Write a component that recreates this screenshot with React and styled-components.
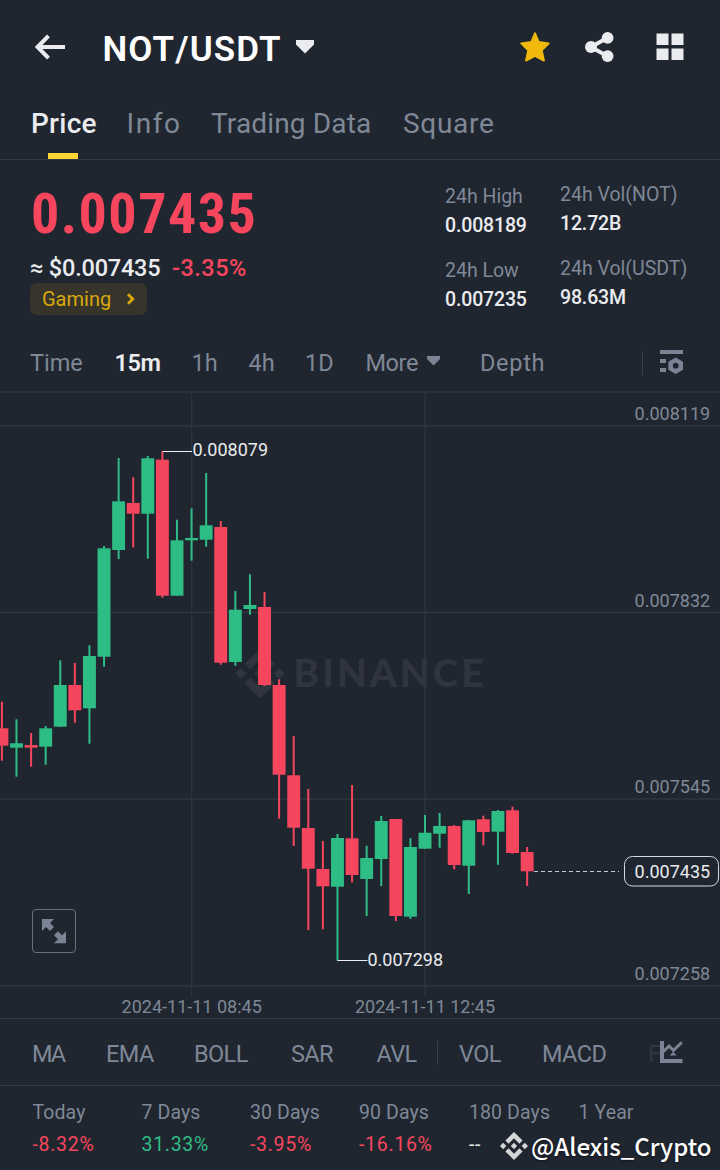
import React from "react";
import styled, { createGlobalStyle } from "styled-components";
import { SiBinance } from "react-icons/si";

const tabs = [
  { name: "Price", spacing: "0.25px" },
  { name: "Info", spacing: "1.6px" },
  { name: "Trading Data", spacing: "0.15px" },
  { name: "Square", spacing: "0.7px" },
];

const highLow = [
  { label: "24h High", value: "0.008189" },
  { label: "24h Low", value: "0.007235" },
];

const volumes = [
  { label: "24h Vol(NOT)", value: "12.72B" },
  { label: "24h Vol(USDT)", value: "98.63M" },
];

const intervals = ["Time", "15m", "1h", "4h", "1D"];

const performance = [
  { label: "Today", value: "-8.32%" },
  { label: "7 Days", value: "31.33%" },
  { label: "30 Days", value: "-3.95%" },
  { label: "90 Days", value: "-16.16%" },
  { label: "180 Days", value: "--" },
  { label: "1 Year", value: "--" },
];

// [rising, high, body top, body bottom, low] on the chart's y scale
const candles = [
  [0, 701.7, 728.3, 745.7, 760.7],
  [1, 719.3, 743.3, 747.7, 776.7],
  [0, 733, 745, 747.7, 766.7],
  [1, 726, 728.3, 746.7, 764.7],
  [1, 660.3, 685, 726.7, 726.7],
  [0, 663, 685, 710.3, 722.7],
  [1, 645.3, 656, 708.3, 743.7],
  [1, 546, 548.3, 656.7, 666.7],
  [1, 458, 501.3, 550, 559],
  [0, 477.3, 503, 513.7, 547.3],
  [1, 456, 458.3, 513.7, 558.7],
  [0, 451.3, 459.7, 595.7, 597.7],
  [1, 519.7, 540.3, 595.7, 595.7],
  [1, 508.3, 538, 540.3, 560.7],
  [1, 473, 525.3, 539.7, 546.7],
  [0, 521, 527, 662.7, 664.7],
  [1, 591, 609.7, 662, 665.7],
  [1, 574.3, 605, 609, 614.7],
  [0, 592, 607, 685, 686],
  [0, 679.3, 685, 774.7, 818.7],
  [0, 736, 775.3, 827.7, 846],
  [0, 789, 828, 868.7, 930],
  [0, 841, 869, 886.3, 929.3],
  [1, 834, 838, 886.7, 960.7],
  [0, 785, 838.3, 875, 882.3],
  [1, 845.7, 858, 879, 916],
  [1, 816, 821, 859, 886],
  [0, 819, 819, 916, 921],
  [1, 838.3, 847, 916.7, 919],
  [1, 815, 832.7, 848.7, 848.7],
  [1, 813, 826, 833.7, 847.7],
  [0, 825, 826, 865, 869.3],
  [1, 820, 820.3, 865.7, 894],
  [0, 815.7, 819.3, 832, 845.3],
  [1, 810, 811, 831.7, 864.7],
  [0, 806.7, 810.3, 853, 853.7],
  [0, 847, 852, 871.3, 886],
];

const gridRows = [
  { y: 426, label: "0.008119" },
  { y: 612.5, label: "0.007832" },
  { y: 799, label: "0.007545" },
  { y: 986, label: "0.007258" },
];

const gridColumns = [
  { x: 191.7, label: "2024-11-11 08:45" },
  { x: 425, label: "2024-11-11 12:45" },
];

const tone = (value) => {
  if (value === "--") return "var(--text)";
  return value.startsWith("-") ? "var(--red)" : "var(--green)";
};

const CandleChart = () => (
  <ChartSvg viewBox="0 393 720 625">
    {gridRows.map(({ y }) => (
      <line key={y} className="grid" x1="0" x2="720" y1={y} y2={y} />
    ))}
    {gridColumns.map(({ x }) => (
      <line key={x} className="grid" x1={x} x2={x} y1="393" y2="996.5" />
    ))}

    <g className="brand">
      <SiBinance x="235" y="648.5" size="50" />
      <text x="293.5" y="687">
        BINANCE
      </text>
    </g>

    {candles.map(([up, high, top, bottom, low], index) => {
      const x = 1.9 + index * 14.59;
      return (
        <g key={index} fill={up ? "var(--green)" : "var(--red)"}>
          <rect x={x - 1} y={high} width="2" height={low - high} />
          <rect x={x - 6.45} y={top} width="12.9" height={bottom - top} />
        </g>
      );
    })}

    <path className="pointer" d="M162.5 451.5H192M337.5 960.5H367.5" />
    <text className="mark" x="192.5" y="456">
      0.008079
    </text>
    <text className="mark" x="367.5" y="966">
      0.007298
    </text>

    {gridRows.map(({ y, label }) => (
      <text key={label} className="axis" x="634.6" y={y - 6}>
        {label}
      </text>
    ))}
    {gridColumns.map(({ x, label }) => (
      <text key={label} className="axis" x={x} y="1013" textAnchor="middle">
        {label}
      </text>
    ))}

    <path className="last" d="M534 871.5H619" />
    <rect className="tag" x="624.5" y="856.5" width="94" height="29.5" rx="8" />
    <text className="mark" x="634.6" y="878">
      0.007435
    </text>
  </ChartSvg>
);

const Stat = ({ label, value }) => (
  <StatItem>
    <dt>{label}</dt>
    <dd>{value}</dd>
  </StatItem>
);

const App = () => {
  return (
    <>
      <GlobalStyle />
      <Screen>
        <Header>
          <svg width="30" height="26" viewBox="0 0 30 26">
            <path
              d="M13.5 1.9 2.6 13l10.9 11.1M3 13h27"
              fill="none"
              stroke="#eaecef"
              strokeWidth="4"
            />
          </svg>
          <h1>NOT/USDT</h1>
          <svg width="18" height="14" viewBox="0 0 18 14">
            <path d="M0 0h18v4.5l-9 9-9-9z" fill="#eaecef" />
          </svg>
          <div className="actions">
            <svg width="30" height="30" viewBox="0 0 30 30">
              <path
                d="M15 1.4l3.7 8.7 10 1.3-7 6.9 2.2 10.2L15 23.900l-8.900 4.600 2.200-10.200-7-6.900 10-1.300z"
                fill="#f0b90b"
                stroke="#f0b90b"
                strokeWidth="2"
                strokeLinejoin="round"
              />
            </svg>
            <svg width="30" height="30" viewBox="0 0 30 30" fill="#eaecef">
              <path
                d="M22.6 5.8 6 15l16.6 9.2"
                fill="none"
                stroke="#eaecef"
                strokeWidth="4"
              />
              <circle cx="6" cy="15" r="6" />
              <circle cx="22.6" cy="5.9" r="5.9" />
              <circle cx="22.6" cy="24.1" r="5.9" />
            </svg>
            <svg width="28" height="28" viewBox="0 0 28 28" fill="#eaecef">
              <path d="M.5.5h12V12H.5zM15.5.5h12V12h-12zM.5 15.5h12V27H.5zM15.5 15.5h12V27h-12z" />
            </svg>
          </div>
        </Header>

        <Tabs>
          {tabs.map(({ name, spacing }, index) => (
            <Tab key={name} $active={index === 0} $spacing={spacing}>
              {name}
            </Tab>
          ))}
        </Tabs>

        <Summary>
          <PriceBlock>
            <strong>0.007435</strong>
            <div className="fiat">
              <span>≈ $0.007435</span>
              <span className="change">-3.35%</span>
            </div>
            <Category>
              Gaming
              <svg width="8" height="12" viewBox="0 0 8 12">
                <path
                  d="M1 1.2 5.8 6 1 10.8"
                  fill="none"
                  stroke="#d9a80f"
                  strokeWidth="2.8"
                />
              </svg>
            </Category>
          </PriceBlock>
          <StatColumn>
            {highLow.map((stat) => (
              <Stat key={stat.label} {...stat} />
            ))}
          </StatColumn>
          <StatColumn $raised>
            {volumes.map((stat) => (
              <Stat key={stat.label} {...stat} />
            ))}
          </StatColumn>
        </Summary>

        <Intervals>
          {intervals.map((interval) => (
            <Interval key={interval} $active={interval === "15m"}>
              {interval}
            </Interval>
          ))}
          <Interval $spacing="-0.4px">
            More
            <svg width="13" height="10" viewBox="0 0 13 10">
              <path d="M0 0h13v3L6.5 9.5 0 3z" fill="#7b8494" />
            </svg>
          </Interval>
          <Interval $spacing="0.7px">Depth</Interval>
          <Divider />
          <svg
            className="settings"
            width="24"
            height="24"
            viewBox="0 0 24 24"
            fill="#7b8494"
          >
            <path d="M1 0h23v4H1zM1 9h6v4H1zM1 18h6v4H1z" />
            <path
              fillRule="evenodd"
              d="M16.7 7.5l7.3 4.2v8l-7.3 4.2-7.3-4.2v-8zm0 5.3a2.9 2.9 0 1 0 0 5.8 2.9 2.9 0 0 0 0-5.8z"
            />
          </svg>
        </Intervals>

        <ChartArea>
          <CandleChart />
          <ExpandButton aria-label="Full screen">
            <svg width="42" height="42" viewBox="1 1 42 42" fill="#7b8494">
              <path d="M10 10h12l-4 4 4 4-4 4-4-4-4 4z" />
              <path d="M34 34.3H22l4-4-4-4 4-4 4 4 4-4z" />
            </svg>
          </ExpandButton>
        </ChartArea>

        <Indicators>
          <Indicator $tight>MA</Indicator>
          <Indicator>EMA</Indicator>
          <Indicator>BOLL</Indicator>
          <Indicator>SAR</Indicator>
          <Indicator>AVL</Indicator>
          <Divider />
          <Indicator>VOL</Indicator>
          <Indicator>MACD</Indicator>
          <Indicator $faded>F</Indicator>
          <svg
            className="indicator-menu"
            width="23"
            height="22"
            viewBox="0 0 23 22"
            fill="#7b8494"
          >
            <path d="M0 0h4v18h18.5v4H0z" />
            <path
              d="M3.5 10.5 9 5l4.5 4.5 8.3-8.3"
              fill="none"
              stroke="#7b8494"
              strokeWidth="3"
            />
            <path d="M13.2 10.8l3.5 3.8h-7z" />
          </svg>
        </Indicators>

        <Performance>
          {performance.map(({ label, value }) => (
            <Period key={label} $color={tone(value)}>
              <dt>{label}</dt>
              <dd>{value}</dd>
            </Period>
          ))}
        </Performance>

        <Signature>
          <SiBinance size="28" color="#d5d6d8" />
          @Alexis_Crypto
        </Signature>
      </Screen>
    </>
  );
};

export default App;

const GlobalStyle = createGlobalStyle`
  :root {
    --bg: #202630;
    --line: #343b45;
    --text: #eaecef;
    --muted: #7f8896;
    --green: #2ebd85;
    --red: #f6465d;
  }

  * {
    box-sizing: border-box;
    margin: 0;
    padding: 0;
  }

  body {
    background: var(--bg);
    font-family: Roboto, sans-serif;
    color: var(--text);
  }
`;

const Screen = styled.main`
  position: relative;
  width: 720px;
  height: 1170px;
  overflow: hidden;
  background: var(--bg);
  white-space: nowrap;
`;

const Header = styled.header`
  height: 94px;
  padding: 0 36px 0 35px;
  display: flex;
  align-items: center;

  h1 {
    width: 193.5px;
    margin: 5px 0 0 37.5px;
    font-size: 35px;
    line-height: 40px;
    font-weight: 600;
    letter-spacing: 1.1px;
    color: #fff;
  }

  .actions {
    margin-left: auto;
    display: flex;
    align-items: center;

    svg:nth-child(2) {
      margin: 0 41px 0 35px;
    }
  }
`;

const Tabs = styled.nav`
  height: 66px;
  padding-left: 31px;
  display: grid;
  grid-template-columns: 95.5px 84.5px 192px auto;
  border-bottom: 1px solid var(--line);
`;

const Tab = styled.div`
  font-size: 28px;
  line-height: 59px;
  font-weight: ${({ $active }) => ($active ? 500 : 450)};
  letter-spacing: ${({ $spacing }) => $spacing};
  color: ${({ $active }) => ($active ? "var(--text)" : "var(--muted)")};

  &::after {
    content: "";
    display: ${({ $active }) => ($active ? "block" : "none")};
    width: 30px;
    height: 6px;
    margin-left: 17px;
    background: #fcd535;
  }
`;

const Summary = styled.section`
  height: 174px;
  padding: 20px 0 0 30px;
  display: grid;
  grid-template-columns: 415px 115px auto;
  align-items: start;
`;

const PriceBlock = styled.div`
  padding-top: 4px;

  strong {
    display: block;
    margin: 0 0 9px 1px;
    font-size: 56px;
    line-height: 60px;
    font-weight: 700;
    font-stretch: 75%;
    letter-spacing: 1.5px;
    color: var(--red);
  }

  .fiat {
    display: grid;
    grid-template-columns: 142px auto;
    font-size: 23.5px;
    line-height: 30px;
    font-weight: 500;
    letter-spacing: -0.2px;
  }

  .change {
    letter-spacing: 0.5px;
    color: var(--red);
  }
`;

const Category = styled.div`
  width: 117px;
  height: 32px;
  padding: 0 12px;
  display: flex;
  align-items: center;
  justify-content: space-between;
  border-radius: 7px;
  background: #37342b;
  font-size: 20px;
  color: #d9a80f;
`;

const StatColumn = styled.dl`
  padding-top: ${({ $raised }) => ($raised ? "0" : "2px")};
  display: grid;
  row-gap: 16px;
`;

const StatItem = styled.div`
  font-size: 19.5px;
  line-height: 29px;

  dt {
    color: var(--muted);
  }

  dd {
    font-weight: 500;
    letter-spacing: -0.15px;
  }
`;

const Intervals = styled.nav`
  height: 59px;
  padding-left: 30px;
  display: grid;
  grid-template-columns: 84.5px 77px 57px 56.5px 60.5px 114.5px 162px 17px auto;
  align-items: center;
  border-bottom: 2px solid #2a303a;

  .settings {
    margin-top: -2px;
  }
`;

const Interval = styled.div`
  display: flex;
  align-items: center;
  font-size: 23.5px;
  font-weight: ${({ $active }) => ($active ? 600 : 400)};
  letter-spacing: ${({ $active, $spacing = "0" }) =>
    $active ? "-0.4px" : $spacing};
  color: ${({ $active }) => ($active ? "var(--text)" : "var(--muted)")};

  svg {
    margin: -3px 0 0 9px;
  }
`;

const Divider = styled.span`
  width: 1px;
  height: 24px;
  background: #3a414d;
`;

const ChartArea = styled.section`
  position: relative;
  height: 626px;
  border-bottom: 1px solid var(--line);
`;

const ChartSvg = styled.svg`
  display: block;
  width: 720px;
  height: 625px;
  font-size: 18px;

  .grid {
    stroke: #2f353f;
    stroke-width: 1.3;
  }

  .brand {
    fill: #2f343f;
    color: #2f343f;

    text {
      font-family: Lato, sans-serif;
      font-size: 38.5px;
      font-weight: 900;
      letter-spacing: 3.1px;
    }
  }

  .axis {
    fill: var(--muted);
  }

  .mark {
    fill: var(--text);
  }

  .pointer {
    stroke: var(--text);
  }

  .last {
    stroke: #c5c8cd;
    stroke-width: 1.2;
    stroke-dasharray: 4 3;
  }

  .tag {
    fill: var(--bg);
    stroke: #d5d8dc;
  }
`;

const ExpandButton = styled.button`
  position: absolute;
  left: 32px;
  top: 516px;
  width: 44px;
  height: 44px;
  display: grid;
  place-items: center;
  border: 1px solid #68707f;
  border-radius: 4px;
  background: transparent;
`;

const Indicators = styled.nav`
  height: 67px;
  padding: 2px 0 0 32px;
  display: grid;
  grid-template-columns: 74px 88px 97px 85.5px 60.5px 22px 83px 106px 13px auto;
  align-items: center;
  border-bottom: 1px solid var(--line);

  .indicator-menu {
    margin: -2px 0 0 -1px;
  }
`;

const Indicator = styled.div`
  padding-top: 1px;
  font-size: 23.5px;
  letter-spacing: ${({ $tight }) => ($tight ? "-2px" : "-0.6px")};
  color: ${({ $faded }) => ($faded ? "#303640" : "var(--muted)")};
`;

const Performance = styled.dl`
  padding: 11px 0 0 32.5px;
  display: grid;
  grid-template-columns: 109px 108.5px 109px 110px 109.5px auto;
`;

const Period = styled.div`
  font-size: 19.5px;
  line-height: 32px;

  dt {
    letter-spacing: 0.1px;
    color: var(--muted);
  }

  dd {
    letter-spacing: 0.7px;
    color: ${({ $color }) => $color};
  }
`;

const Signature = styled.div`
  position: absolute;
  left: 500px;
  top: 1128px;
  height: 36px;
  display: flex;
  align-items: center;
  gap: 3px;
  font: 500 24px/36px "Noto Sans CJK SC", sans-serif;
  color: #fff;
  text-shadow: 0 1px 2px rgba(0, 0, 0, 0.5);
`;
